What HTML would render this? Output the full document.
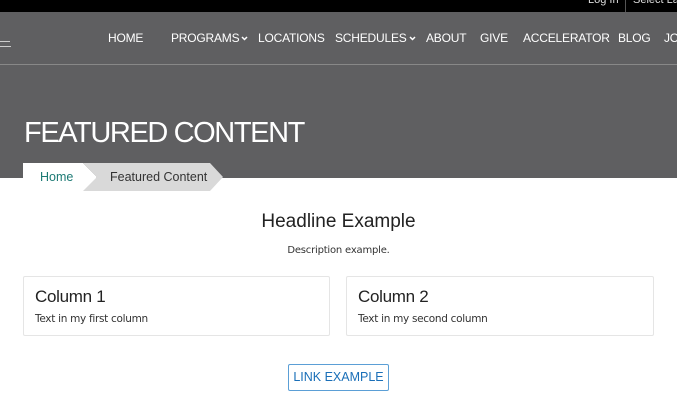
<!DOCTYPE html>
<html><head><style>
*{margin:0;padding:0;box-sizing:border-box}
body{width:677px;height:402px;overflow:hidden;background:#fff;font-family:"Liberation Sans",Arial,sans-serif;position:relative}
.top{position:absolute;left:0;top:0;width:677px;height:12px;background:#000;color:#ddd;font-size:11px;overflow:hidden;white-space:nowrap}
.nav{position:absolute;left:0;top:12px;width:677px;height:53px;background:#5f5f61;border-bottom:1px solid #888}
.nav span{position:absolute;top:19px;color:#fff;font-size:12px;white-space:nowrap;letter-spacing:-0.2px}
.nav svg{vertical-align:middle;margin-left:2px}
.hero{position:absolute;left:0;top:65px;width:677px;height:113px;background:#5f5f61}
.hero h1{position:absolute;left:24px;top:52px;color:#fff;font-weight:normal;font-size:29px;letter-spacing:-1.4px}
.bc{position:absolute;top:163px;height:28px;font-size:12.5px;line-height:28px}
.card{position:absolute;top:276px;height:60px;border:1px solid #e5e5e5;border-radius:2px}
.card h3{position:absolute;left:11px;top:10px;font-weight:normal;font-size:17px;color:#222;letter-spacing:-0.3px}
.card p{position:absolute;left:11px;top:36px;font-size:10.5px;color:#333;font-family:"DejaVu Sans",sans-serif;letter-spacing:-0.3px}
</style></head><body>
<div class="top"><span style="position:absolute;left:588px;top:-6px">Log In</span><div style="position:absolute;left:625px;top:0;width:1px;height:12px;background:#555"></div><span style="position:absolute;left:633px;top:-6px">Select Lan</span></div>
<div class="nav">
<div style="position:absolute;left:0;top:29px;width:10px;height:1px;background:#ccc"></div><div style="position:absolute;left:0;top:34px;width:11px;height:1px;background:#ccc"></div>
<span style="left:108px">HOME</span>
<span style="left:171px">PROGRAMS<svg width="7" height="5"><path d="M1 1l2.5 2.5L6 1" stroke="#fff" stroke-width="1.5" fill="none"/></svg></span>
<span style="left:258px">LOCATIONS</span>
<span style="left:335px">SCHEDULES<svg width="7" height="5"><path d="M1 1l2.5 2.5L6 1" stroke="#fff" stroke-width="1.5" fill="none"/></svg></span>
<span style="left:426px">ABOUT</span>
<span style="left:480px">GIVE</span>
<span style="left:523px">ACCELERATOR</span>
<span style="left:618px">BLOG</span>
<span style="left:664px">JO</span>
</div>
<div class="hero"><h1>FEATURED CONTENT</h1></div>
<svg style="position:absolute;left:0;top:163px" width="240" height="28"><polygon points="23,0 83,0 97,14 83,28 23,28" fill="#fff"/><polygon points="83,0 210,0 223,14 210,28 83,28 97,14" fill="#d9d9d9"/></svg>
<div class="bc" style="left:40px;color:#1c7a74">Home</div>
<div class="bc" style="left:110px;color:#333">Featured Content</div>
<div style="position:absolute;left:0;width:677px;top:211px;text-align:center;font-size:19px;color:#222">Headline Example</div>
<div style="position:absolute;left:0;width:677px;top:245px;text-align:center;font-size:10px;color:#333;font-family:'DejaVu Sans',sans-serif;letter-spacing:-0.2px">Description example.</div>
<div class="card" style="left:23px;width:307px"><h3>Column 1</h3><p>Text in my first column</p></div>
<div class="card" style="left:346px;width:308px"><h3>Column 2</h3><p>Text in my second column</p></div>
<div style="position:absolute;left:288px;top:364px;width:101px;height:27px;border:1px solid #5b9fd6;border-radius:2px;color:#1a6fb8;font-size:12.5px;text-align:center;line-height:25px">LINK EXAMPLE</div>
</body></html>
